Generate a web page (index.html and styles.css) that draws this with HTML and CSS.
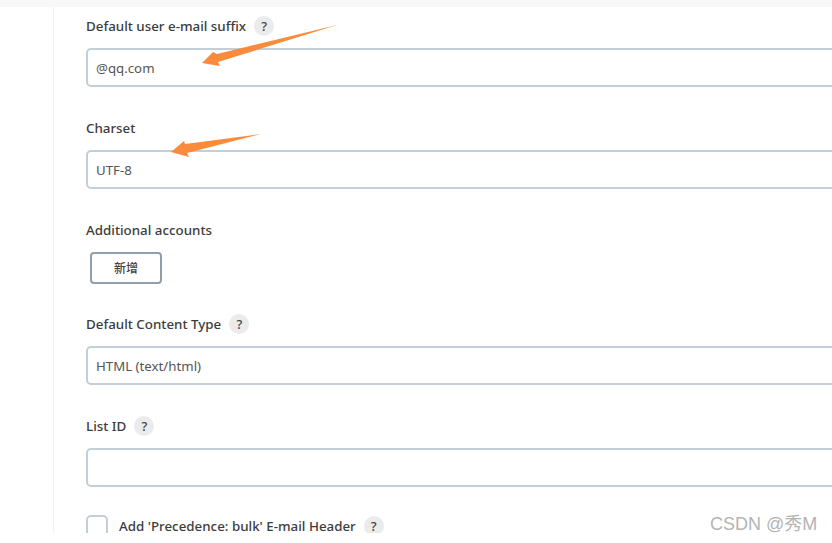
FILE: index.html
```html
<!DOCTYPE html>
<html lang="en">
<head>
  <meta charset="UTF-8" />
  <title>Mail settings</title>
  <link rel="stylesheet" href="styles.css">
</head>
<body>
<div class="page">
  <div class="top-strip"></div>
  <div class="panel">
    <div class="field">
      <div class="field-label">Default user e-mail suffix <span class="help">?</span></div>
      <input class="text-input" type="text" value="@qq.com">
    </div>
    <div class="field">
      <div class="field-label">Charset</div>
      <input class="text-input" type="text" value="UTF-8">
    </div>
    <div class="field accounts">
      <div class="field-label">Additional accounts</div>
      <button class="add-button">新增</button>
    </div>
    <div class="field">
      <div class="field-label">Default Content Type <span class="help">?</span></div>
      <input class="text-input" type="text" value="HTML (text/html)">
    </div>
    <div class="field">
      <div class="field-label">List ID <span class="help">?</span></div>
      <input class="text-input" type="text">
    </div>
    <div class="check-row">
      <span class="checkbox"></span>
      <span class="check-text">Add 'Precedence: bulk' E-mail Header</span>
      <span class="help">?</span>
    </div>
  </div>
</div>

<svg class="arrows" width="832" height="543" viewBox="0 0 832 543">
  <path d="M337 25 L217 54 L213 52 L202 63 L220 66 L218 62 Z" fill="#fb8b3c"/>
  <path d="M261 134 L185 144 L184 141 L171 152 L189 157 L187 153 Z" fill="#fb8b3c"/>
</svg>

<div class="watermark">CSDN @秀M</div>
</body>
</html>
```

FILE: styles.css
```css
html, body {
  margin: 0;
  padding: 0;
  background: #fff;
}
body {
  width: 832px;
  height: 543px;
  overflow: hidden;
  position: relative;
  font-family: "Noto Sans", "Noto Sans CJK SC", sans-serif;
  font-size: 13.35px;
  color: #333;
}
.page {
  height: 533px;
  overflow: hidden;
}
.top-strip {
  height: 7px;
  background: #f8f8f8;
}
.panel {
  margin-left: 53px;
  padding-left: 32px;
  border-left: 1px solid #f2f2f2;
  height: 526px;
  width: 900px;
}
.field {
  height: 102px;
}
.field-label {
  display: flex;
  align-items: center;
  gap: 8px;
  height: 20px;
  padding-top: 9px;
  margin-bottom: 12px;
  font-weight: 500;
  color: #3c3c3c;
}
.help {
  display: inline-block;
  width: 20px;
  height: 20px;
  line-height: 20px;
  border-radius: 50%;
  background: #ebebeb;
  text-align: center;
  font-size: 13px;
  font-weight: 500;
  color: #444;
}
.text-input {
  display: block;
  box-sizing: border-box;
  width: 800px;
  height: 39px;
  padding: 0 8px;
  border: 2px solid #c2ced8;
  border-radius: 5px;
  background: #fff;
  font-family: inherit;
  font-size: 13.25px;
  color: #555;
}
.accounts {
  height: 94px;
}
.add-button {
  display: block;
  box-sizing: border-box;
  width: 72px;
  height: 32px;
  margin-left: 4px;
  border: 2px solid #8f9fac;
  border-radius: 4px;
  background: #fff;
  font-family: inherit;
  font-size: 12px;
  font-weight: 500;
  color: #444;
}
.check-row {
  display: flex;
  align-items: center;
  height: 22px;
  padding-top: 6px;
}
.checkbox {
  box-sizing: border-box;
  width: 22px;
  height: 22px;
  border: 2px solid #c2ced8;
  border-radius: 5px;
  margin-right: 11px;
}
.check-text {
  font-weight: 500;
  color: #3c3c3c;
  margin-right: 8px;
}
.arrows {
  position: absolute;
  left: 0;
  top: 0;
}
.watermark {
  position: absolute;
  left: 710px;
  top: 513px;
  font-family: "Liberation Sans", "Noto Sans CJK SC", sans-serif;
  font-size: 18px;
  line-height: 22px;
  color: #b4b4b4;
}
```
